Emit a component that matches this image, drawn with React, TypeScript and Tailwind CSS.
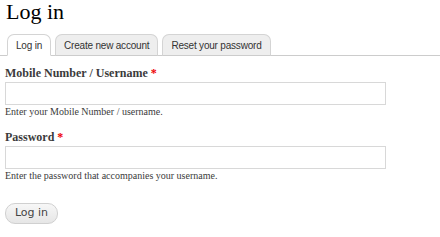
import React from "react";

const serif = { fontFamily: '"Liberation Serif", Georgia, serif' };

const Tab: React.FC<{ label: string; active?: boolean }> = ({ label, active }) => (
  <li
    className={
      "mr-[4px] -mb-px rounded-t-[7px] border border-[#d4d4d4] px-[8px] h-[22px] flex items-center text-[10px] tracking-[-0.2px] text-[#333] " +
      (active ? "bg-white border-b-white" : "bg-[#eeeeee] border-b-[#cccccc]")
    }
  >
    {label}
  </li>
);

const Field: React.FC<{ label: string; help: string; type?: string }> = ({ label, help, type = "text" }) => (
  <div className="mb-[11px]">
    <label className="block text-[12px] font-bold text-[#3b3b3b] leading-[14px] mb-[2px]" style={serif}>
      {label} <span className="text-[#e00]">*</span>
    </label>
    <input
      type={type}
      className="block w-[381px] h-[23px] border border-[#d8d8d8] bg-white outline-none"
    />
    <div className="text-[10px] text-[#3b3b3b] leading-[14px]" style={serif}>
      {help}
    </div>
  </div>
);

const App: React.FC = () => {
  return (
    <div className="w-[440px] h-[237px] bg-white overflow-hidden" style={{ fontFamily: '"Liberation Sans", Arial, sans-serif' }}>
      <h1 className="text-[22px] leading-[24px] text-[#000] pl-[6px]" style={serif}>
        Log in
      </h1>
      <ul className="flex pl-[7px] mt-[10px] border-b border-[#cccccc] h-[22px]">
        <Tab label="Log in" active />
        <Tab label="Create new account" />
        <Tab label="Reset your password" />
      </ul>
      <form className="pl-[5px] pt-[10px]">
        <Field label="Mobile Number / Username" help="Enter your Mobile Number / username." />
        <Field label="Password" help="Enter the password that accompanies your username." type="password" />
        <button
          type="button"
          className="mt-[9px] h-[21px] w-[53px] rounded-[10px] border border-[#d0d0d0] bg-gradient-to-b from-[#f7f7f7] to-[#e6e6e6] text-[11px] text-[#444]"
          style={{ fontFamily: '"DejaVu Sans", sans-serif' }}
        >
          Log in
        </button>
      </form>
    </div>
  );
};

export default App;
